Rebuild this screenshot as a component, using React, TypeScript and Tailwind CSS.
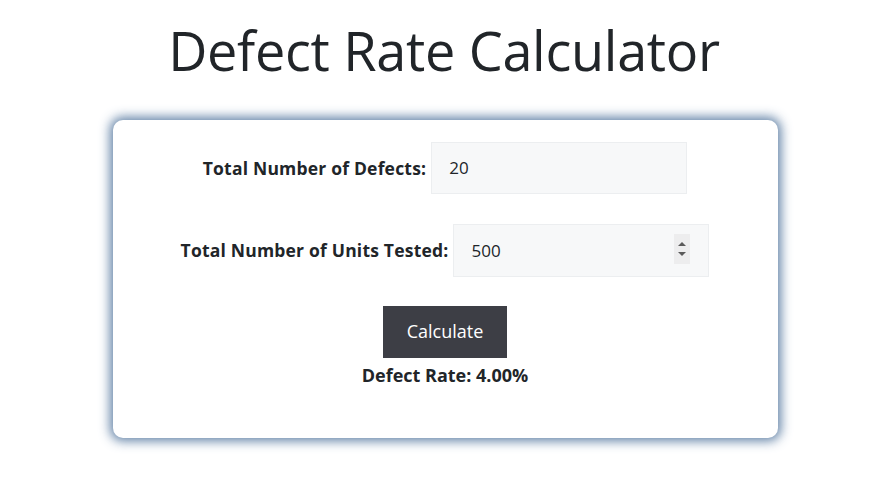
import React from 'react';

export default function App() {
  const [defects, setDefects] = React.useState('20');
  const [units, setUnits] = React.useState('500');
  const [rate, setRate] = React.useState<string | null>('4.00');

  const calculate = () => {
    const d = parseFloat(defects);
    const u = parseFloat(units);
    if (!isNaN(d) && !isNaN(u) && u > 0) setRate(((d / u) * 100).toFixed(2));
  };

  const step = (delta: number) => {
    const n = parseFloat(units) || 0;
    setUnits(String(n + delta));
  };

  return (
    <div className="min-h-screen bg-white text-[#212529] font-['Open_Sans',sans-serif]">
      <h1 className="pt-[18px] text-center text-[54px] font-normal leading-[1.2] tracking-[-0.3px]">
        Defect Rate Calculator
      </h1>

      <div className="mx-auto mt-[37px] w-[665px] translate-x-[1px] rounded-[10px] bg-white px-6 pb-[50px] pt-[22px] shadow-[0_0_11px_3px_rgba(70,108,150,0.85)]">
        <div className="flex items-center justify-center gap-[5px]">
          <label className="text-[17.5px] font-bold tracking-[0.2px]">Total Number of Defects:</label>
          <input
            type="text"
            value={defects}
            onChange={e => setDefects(e.target.value)}
            className="h-[52px] w-[256px] border border-[#eceef0] bg-[#f7f8f9] px-[17px] text-[17px] outline-none"
          />
        </div>

        <div className="mt-[30px] flex items-center justify-center gap-[5px]">
          <label className="text-[17.5px] font-bold tracking-[0.2px]">Total Number of Units Tested:</label>
          <div className="relative">
            <input
              type="number"
              value={units}
              onChange={e => setUnits(e.target.value)}
              className="h-[53px] w-[256px] appearance-none border border-[#eceef0] bg-[#f7f8f9] pl-[17px] pr-[30px] text-[17px] outline-none [&::-webkit-inner-spin-button]:appearance-none [&::-webkit-outer-spin-button]:appearance-none"
            />
            <div className="absolute right-[19px] top-[10px] flex h-[30px] w-[16px] flex-col items-center justify-center gap-[6px] bg-[#ededee]">
              <button onClick={() => step(1)} className="h-0 w-0 border-x-[4px] border-b-[4px] border-x-transparent border-b-[#5a5a5a]" />
              <button onClick={() => step(-1)} className="h-0 w-0 border-x-[4px] border-t-[4px] border-x-transparent border-t-[#5a5a5a]" />
            </div>
          </div>
        </div>

        <div className="mt-[29px] flex flex-col items-center">
          <button
            onClick={calculate}
            className="h-[52px] w-[124px] bg-[#3d3e45] text-[18px] text-white"
          >
            Calculate
          </button>
          {rate !== null && (
            <p className="mt-[5px] text-[18px] font-bold leading-[1.4]">Defect Rate: {rate}%</p>
          )}
        </div>
      </div>
    </div>
  );
}
